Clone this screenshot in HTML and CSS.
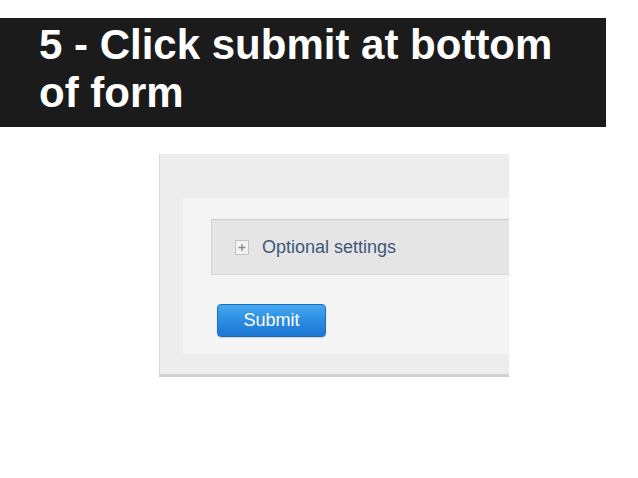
FILE: index.html
```html
<!DOCTYPE html>
<html>
<head>
<meta charset="utf-8">
<link rel="stylesheet" href="styles.css">
</head>
<body>
<div class="banner">
  <h1 class="title">5 - Click submit at bottom of form</h1>
</div>
<div class="shot">
  <div class="panel">
    <div class="optional">
      <span class="plus">
        <svg width="14" height="15" viewBox="0 0 14 15">
          <rect x="0.5" y="0.5" width="13" height="14" fill="#f2f2f2" stroke="#c4c4c4"/>
          <path d="M7 4v7M3.5 7.5h7" stroke="#8a8a8a" stroke-width="1.4"/>
        </svg>
      </span>
      <span class="opt-label">Optional settings</span>
    </div>
    <button class="submit">Submit</button>
  </div>
</div>
</body>
</html>
```
FILE: styles.css
```css
html, body {
  margin: 0;
  padding: 0;
  background: #ffffff;
}
.banner {
  margin-top: 18px;
  width: 606px;
  height: 109px;
  box-sizing: border-box;
  background: #1b1b1b;
  padding: 3px 0 0 39px;
}
.title {
  margin: 0;
  width: 540px;
  font-family: "Liberation Sans", Arial, sans-serif;
  font-weight: bold;
  font-size: 42px;
  line-height: 48px;
  color: #ffffff;
}
.shot {
  margin: 27px 0 0 159px;
  width: 350px;
  box-sizing: border-box;
  background: #ededed;
  border-left: 1px solid #d9d9d9;
  border-bottom: 3px solid #d2d2d2;
  padding: 44px 0 20px 23px;
}
.panel {
  background: #f4f4f4;
  padding: 21px 0 17px 28px;
  display: flex;
  flex-direction: column;
  align-items: flex-start;
}
.optional {
  align-self: stretch;
  height: 56px;
  box-sizing: border-box;
  background: #e5e5e5;
  border-top: 1px solid #c9c9c9;
  border-left: 1px solid #d0d0d0;
  border-bottom: 1px solid #d6d6d6;
  display: flex;
  align-items: center;
  padding-left: 23px;
  gap: 13px;
}
.plus {
  display: flex;
  margin-top: 1px;
}
.opt-label {
  font-family: "Liberation Sans", Arial, sans-serif;
  font-size: 18px;
  color: #3b5878;
}
.submit {
  margin: 29px 0 0 6px;
  width: 109px;
  height: 33px;
  border: 1px solid #1a6cbf;
  border-radius: 4px;
  background: linear-gradient(#46a8f0, #2a8ae2 55%, #1b77d4);
  color: #ffffff;
  font-family: "Liberation Sans", Arial, sans-serif;
  font-size: 18px;
  padding: 0;
  box-shadow: 0 1px 1px rgba(0,0,0,0.15);
}
```
